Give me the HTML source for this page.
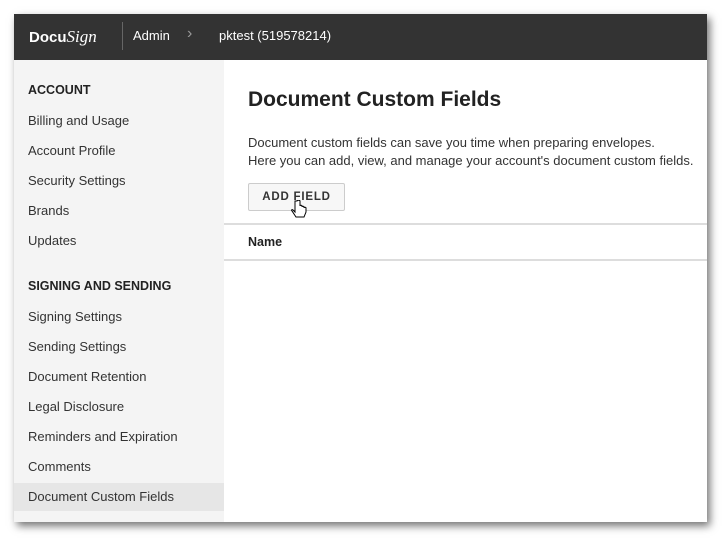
<!DOCTYPE html>
<html><head><style>
*{margin:0;padding:0;box-sizing:border-box}
body{width:722px;height:538px;background:#fff;font-family:"Liberation Sans",sans-serif;position:relative;overflow:hidden}
#win{position:absolute;left:14px;top:14px;width:693px;height:508px;background:#fff;box-shadow:3px 4px 8px rgba(0,0,0,.55);overflow:hidden}
#hdr{position:absolute;left:0;top:0;width:693px;height:46px;background:#333;color:#fff}
#side{position:absolute;left:0;top:46px;width:210px;height:462px;background:#f4f4f4}
.h{position:absolute;left:14px;font-size:12.5px;font-weight:bold;color:#222}
.i{position:absolute;left:14px;font-size:13px;color:#333}
.sel{position:absolute;left:0;top:423px;width:210px;height:28px;background:#e6e6e6}
</style></head><body>
<div id="win">
<div id="hdr">
<span style="position:absolute;left:15px;top:13px;font-size:15px;font-weight:bold">Docu<i style="font-family:'Liberation Serif',serif;font-weight:normal;font-size:17px">Sign</i></span>
<div style="position:absolute;left:108px;top:8px;width:1px;height:28px;background:#666"></div>
<span style="position:absolute;left:119px;top:14px;font-size:13px">Admin</span>
<span style="position:absolute;left:173px;top:11px;font-size:16px;color:#999">›</span>
<span style="position:absolute;left:205px;top:14px;font-size:13px">pktest (519578214)</span>
</div>
<div id="side">
<div class="sel"></div>
<div class="h" style="top:23px">ACCOUNT</div>
<div class="i" style="top:53px">Billing and Usage</div>
<div class="i" style="top:83px">Account Profile</div>
<div class="i" style="top:113px">Security Settings</div>
<div class="i" style="top:143px">Brands</div>
<div class="i" style="top:173px">Updates</div>
<div class="h" style="top:219px">SIGNING AND SENDING</div>
<div class="i" style="top:249px">Signing Settings</div>
<div class="i" style="top:279px">Sending Settings</div>
<div class="i" style="top:309px">Document Retention</div>
<div class="i" style="top:339px">Legal Disclosure</div>
<div class="i" style="top:369px">Reminders and Expiration</div>
<div class="i" style="top:399px">Comments</div>
<div class="i" style="top:429px">Document Custom Fields</div>
</div>
<div style="position:absolute;left:234px;top:74px;font-size:21px;font-weight:bold;color:#222">Document Custom Fields</div>
<div style="position:absolute;left:234px;top:120px;font-size:13px;color:#333;line-height:18px">Document custom fields can save you time when preparing envelopes.<br>Here you can add, view, and manage your account's document custom fields.</div>
<div style="position:absolute;left:234px;top:169px;width:97px;height:28px;border:1px solid #ccc;border-radius:2px;background:#f7f7f7;font-size:11.5px;font-weight:bold;letter-spacing:.8px;color:#333;text-align:center;line-height:26px">ADD FIELD</div>
<div style="position:absolute;left:210px;top:209px;width:483px;height:2px;background:#ddd"></div>
<div style="position:absolute;left:234px;top:221px;font-size:12.5px;font-weight:bold;color:#222">Name</div>
<div style="position:absolute;left:210px;top:245px;width:483px;height:2px;background:#ddd"></div>
<svg style="position:absolute;left:276px;top:186px" width="18" height="22" viewBox="0 0 18 22"><path d="M5 1v11l-2-2c-1-1-2 0-1 1l4 6h8l2-5v-4c0-1-2-1-2 0v-1c0-1-2-1-2 0v-1c0-1-2-1-2 0V1c0-1-3-1-3 0z" fill="#fff" stroke="#000" stroke-width="1"/></svg>
</div>
</body></html>
